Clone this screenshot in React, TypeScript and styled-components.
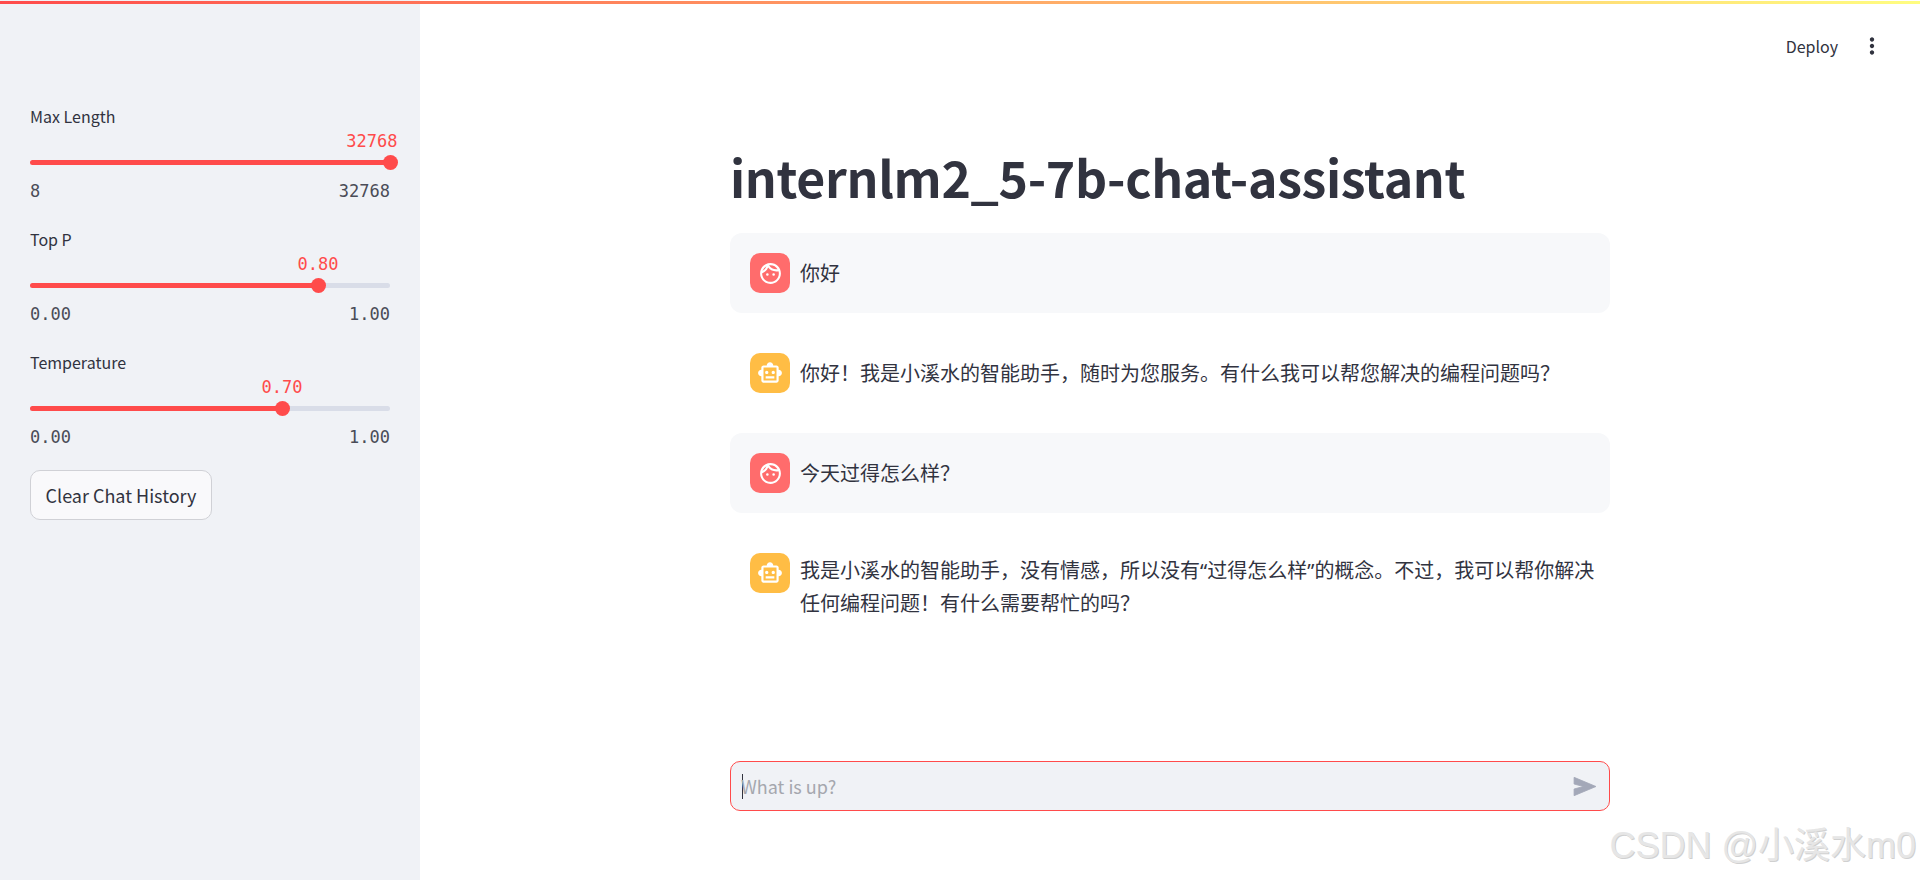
import React from 'react';
import styled, { createGlobalStyle } from 'styled-components';
import { MdOutlineFace, MdOutlineSmartToy, MdMoreVert } from 'react-icons/md';

const sans = '"Noto Sans CJK SC", "Noto Sans", sans-serif';
const mono = '"DejaVu Sans Mono", "Liberation Mono", monospace';

const GlobalStyle = createGlobalStyle`
  html, body {
    margin: 0;
    padding: 0;
    background: #fff;
  }
  * {
    box-sizing: border-box;
  }
  body {
    font-family: ${sans};
    color: #31333f;
    overflow: hidden;
  }
`;

const Page = styled.div`
  position: relative;
  display: flex;
  width: 1920px;
  height: 880px;
  overflow: hidden;
`;

const Decoration = styled.div`
  position: absolute;
  top: 1px;
  left: 0;
  right: 0;
  height: 3px;
  background: linear-gradient(90deg, #ff4b4b, #fffd80);
`;

const Sidebar = styled.aside`
  flex: 0 0 420px;
  display: flex;
  flex-direction: column;
  gap: 20px;
  padding: 101px 30px 0;
  background: #f0f2f6;
`;

const SliderBox = styled.div`
  display: flex;
  flex-direction: column;
  height: 103px;
`;

const SliderLabel = styled.label`
  height: 30px;
  font-size: 16px;
  line-height: 30px;
`;

const TrackArea = styled.div`
  position: relative;
  height: 31px;
  margin-top: 6px;
  padding-top: 23px;
`;

const Track = styled.div`
  height: 5px;
  border-radius: 3px;
  background: #d9dde8;
  overflow: hidden;
`;

const Fill = styled.div`
  height: 100%;
  background: #ff4b4b;
`;

const Thumb = styled.div`
  position: absolute;
  top: 18px;
  width: 15px;
  height: 15px;
  margin-left: -7.5px;
  border-radius: 50%;
  background: #ff4b4b;
`;

const Value = styled.div<{ $atEnd?: boolean }>`
  position: absolute;
  top: -8px;
  font-family: ${mono};
  font-size: 17px;
  line-height: 24px;
  color: #ff4b4b;
  transform: ${(p) => (p.$atEnd ? 'translateX(calc(-100% + 7.5px))' : 'translateX(-50%)')};
`;

const Ticks = styled.div`
  display: flex;
  justify-content: space-between;
  margin-top: 11px;
  font-family: ${mono};
  font-size: 17px;
  line-height: 24px;
  color: #4a4c57;
`;

const ClearButton = styled.button`
  align-self: flex-start;
  width: 182px;
  height: 50px;
  margin-top: 0;
  padding: 0;
  border: 1px solid #d0d1d6;
  border-radius: 10px;
  background: #f9f9fb;
  font-family: ${sans};
  font-size: 18px;
  color: #31333f;
`;

const Main = styled.main`
  flex: 1;
  display: flex;
  flex-direction: column;
  align-items: center;
`;

const TopBar = styled.header`
  align-self: stretch;
  display: flex;
  justify-content: flex-end;
  align-items: center;
  gap: 21px;
  height: 30px;
  margin-top: 31px;
  padding-right: 35px;
  font-size: 16px;
`;

const Column = styled.div`
  flex: 1;
  display: flex;
  flex-direction: column;
  width: 880px;
`;

const Title = styled.h1`
  margin: 85px 0 0;
  font-size: 50px;
  line-height: 60px;
  font-weight: 700;
  letter-spacing: -0.35px;
  color: #31333f;
`;

const Messages = styled.div`
  display: flex;
  flex-direction: column;
  gap: 20px;
  margin-top: 27px;
`;

const Message = styled.div<{ $user?: boolean }>`
  display: flex;
  gap: 10px;
  padding: 20px 12px 20px 20px;
  border-radius: 12px;
  background: ${(p) => (p.$user ? '#f7f8fa' : 'transparent')};
`;

const Avatar = styled.div<{ $user?: boolean }>`
  flex: 0 0 40px;
  display: flex;
  align-items: center;
  justify-content: center;
  height: 40px;
  border-radius: 10px;
  background: ${(p) => (p.$user ? '#ff6c6c' : '#ffbd45')};
  color: #fff;
  font-size: ${(p) => (p.$user ? '25px' : '26px')};
`;

const MessageText = styled.div<{ $multiline?: boolean }>`
  flex: 1;
  padding-top: ${(p) => (p.$multiline ? '0' : '3px')};
  font-size: 20px;
  line-height: 33px;
  color: #31333f;
`;

const Quote = styled.span`
  font-family: "Noto Sans", sans-serif;
  line-height: 0;
`;

const InputBar = styled.div`
  display: flex;
  align-items: center;
  justify-content: space-between;
  height: 50px;
  margin-top: auto;
  margin-bottom: 69px;
  padding: 0 12px 0 11px;
  border: 1px solid #ff4b4b;
  border-radius: 10px;
  background: #f0f2f6;
`;

const Placeholder = styled.div`
  height: 25px;
  border-left: 1px solid #31333f;
  font-size: 18px;
  line-height: 25px;
  text-indent: -2px;
  color: #a5a7ae;
`;

const Watermark = styled.div`
  position: absolute;
  right: 4px;
  bottom: 13px;
  font-family: "Liberation Sans", ${sans};
  font-size: 36px;
  line-height: 42px;
  color: #e6e6e6;
  text-shadow: 1px 1px 0 #d0d0d0;
  white-space: nowrap;
`;

const sliders = [
  { label: 'Max Length', value: '32768', ratio: 1, min: '8', max: '32768' },
  { label: 'Top P', value: '0.80', ratio: 0.8, min: '0.00', max: '1.00' },
  { label: 'Temperature', value: '0.70', ratio: 0.7, min: '0.00', max: '1.00' },
];

const SendIcon = () => (
  <svg width="25" height="25" viewBox="0 0 24 24" fill="#a3a8b8">
    <path d="M2 3.2 23 12 2 20.8 2 14.4 11 12 2 9.6z" stroke="#a3a8b8" strokeWidth="0.8" strokeLinejoin="round" />
  </svg>
);

const App = () => (
  <Page>
    <GlobalStyle />
    <Decoration />
    <Sidebar>
      {sliders.map((s) => (
        <SliderBox key={s.label}>
          <SliderLabel>{s.label}</SliderLabel>
          <TrackArea>
            <Value $atEnd={s.ratio === 1} style={{ left: `${s.ratio * 100}%` }}>
              {s.value}
            </Value>
            <Track>
              <Fill style={{ width: `${s.ratio * 100}%` }} />
            </Track>
            <Thumb style={{ left: `${s.ratio * 100}%` }} />
          </TrackArea>
          <Ticks>
            <span>{s.min}</span>
            <span>{s.max}</span>
          </Ticks>
        </SliderBox>
      ))}
      <ClearButton>Clear Chat History</ClearButton>
    </Sidebar>
    <Main>
      <TopBar>
        <span>Deploy</span>
        <MdMoreVert size={26} />
      </TopBar>
      <Column>
        <Title>internlm2_5-7b-chat-assistant</Title>
        <Messages>
          <Message $user>
            <Avatar $user>
              <MdOutlineFace />
            </Avatar>
            <MessageText>你好</MessageText>
          </Message>
          <Message>
            <Avatar>
              <MdOutlineSmartToy />
            </Avatar>
            <MessageText>你好！我是小溪水的智能助手，随时为您服务。有什么我可以帮您解决的编程问题吗？</MessageText>
          </Message>
          <Message $user>
            <Avatar $user>
              <MdOutlineFace />
            </Avatar>
            <MessageText>今天过得怎么样？</MessageText>
          </Message>
          <Message>
            <Avatar>
              <MdOutlineSmartToy />
            </Avatar>
            <MessageText $multiline>
              我是小溪水的智能助手，没有情感，所以没有<Quote>“</Quote>过得怎么样<Quote>”</Quote>的概念。不过，我可以帮你解决任何编程问题！有什么需要帮忙的吗？
            </MessageText>
          </Message>
        </Messages>
        <InputBar>
          <Placeholder>What is up?</Placeholder>
          <SendIcon />
        </InputBar>
      </Column>
    </Main>
    <Watermark>CSDN @小溪水m0</Watermark>
  </Page>
);

export default App;
